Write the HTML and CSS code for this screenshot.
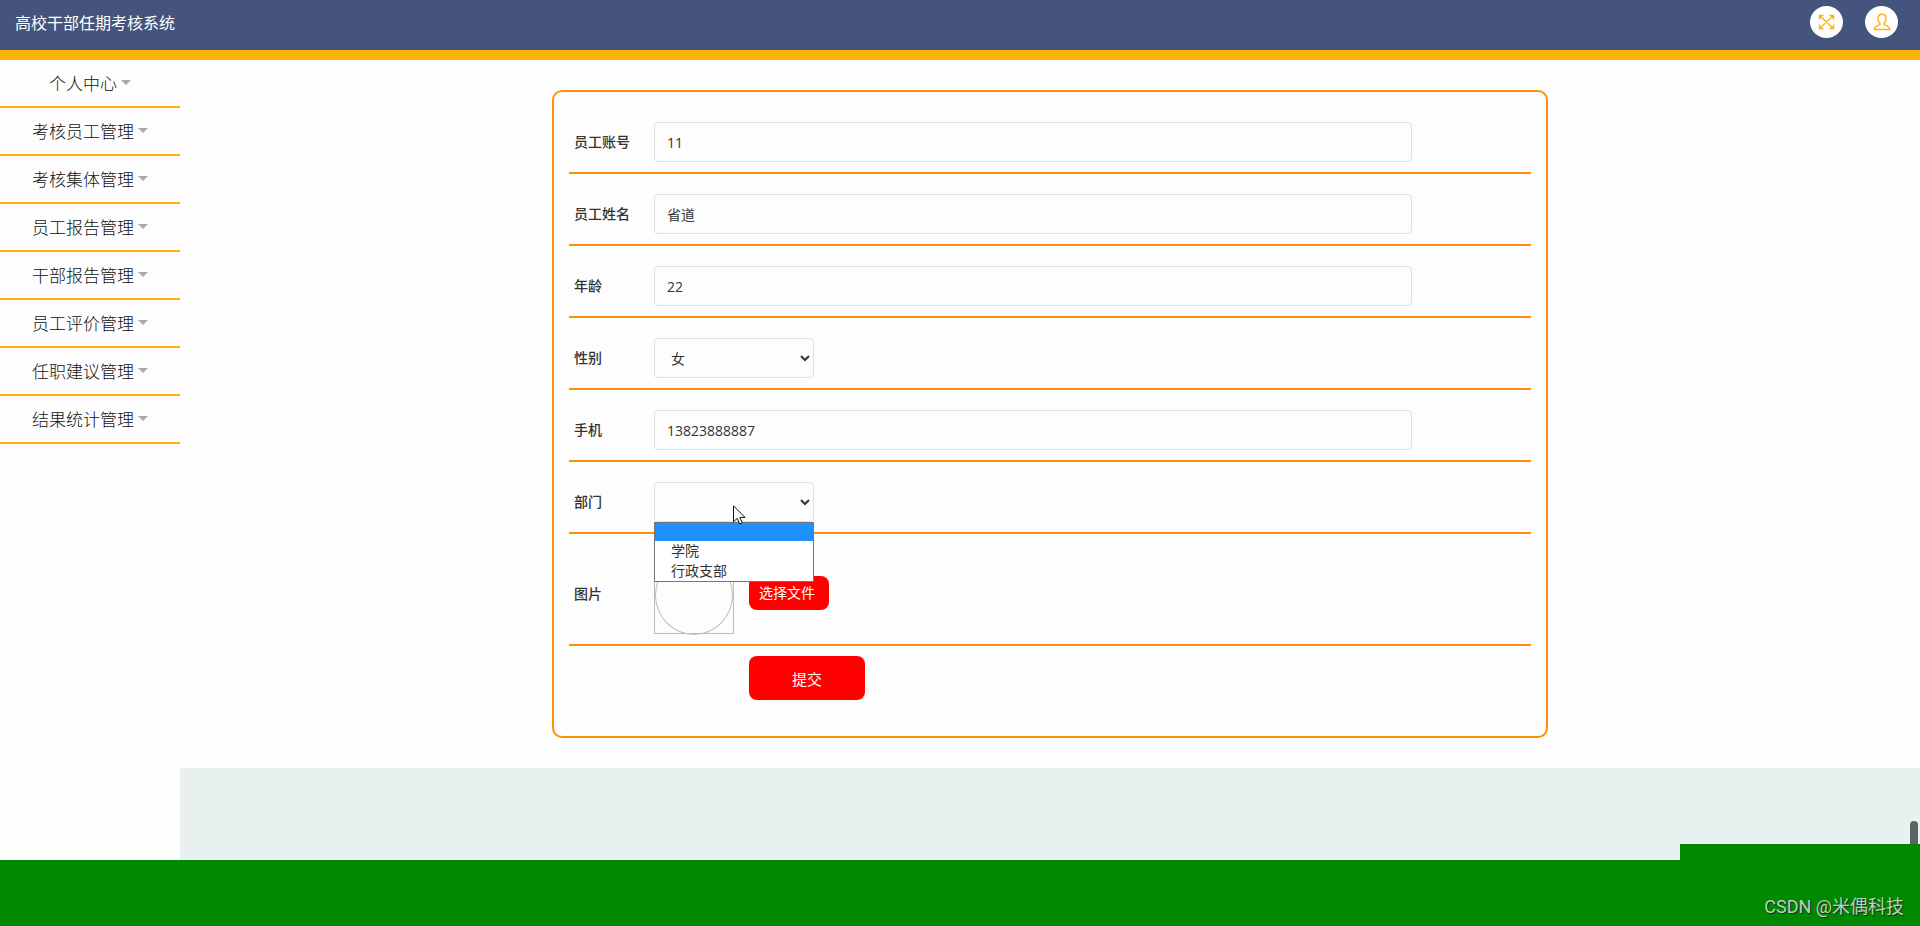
FILE: index.html
```html
<!DOCTYPE html>
<html lang="zh-CN">
<head>
    <meta charset="UTF-8">
    <meta name="viewport" content="width=device-width, initial-scale=1.0">
    <title>高校干部任期考核系统</title>
    <link rel="stylesheet" href="styles.css">
</head>
<body>

    <header class="header">
        <h1>高校干部任期考核系统</h1>
        <div class="header-actions">
            <button type="button" class="icon-btn" aria-label="全屏">
                <svg width="17" height="16" viewBox="0 0 17 16" fill="none" stroke="#ffb20a" stroke-width="1.4">
                    <path d="M1.5 1.5l14 13M15.500 1.500l-14 13M1.500 5.500v-4h4M11.500 1.500h4v4M15.500 10.500v4h-4M5.500 14.500h-4v-4"/>
                </svg>
            </button>
            <button type="button" class="icon-btn" aria-label="用户">
                <svg width="18" height="18" viewBox="0 0 18 18" fill="none" stroke="#ffb20a" stroke-width="1.4">
                    <path d="M7 10.500C5.600 9.300 5 7.600 5 5.600C5 3 6.600 1.200 9 1.200s4 1.800 4 4.400c0 2-.6 3.700-2 4.900v1.200c2.800.8 5.200 1.800 5.800 4.800H1.200c.6-3 3-4 5.800-4.800z"/>
                </svg>
            </button>
        </div>
    </header>

    <div class="container">
        <nav class="sidebar">
            <a href="#">个人中心<span class="caret"></span></a>
            <a href="#">考核员工管理<span class="caret"></span></a>
            <a href="#">考核集体管理<span class="caret"></span></a>
            <a href="#">员工报告管理<span class="caret"></span></a>
            <a href="#">干部报告管理<span class="caret"></span></a>
            <a href="#">员工评价管理<span class="caret"></span></a>
            <a href="#">任职建议管理<span class="caret"></span></a>
            <a href="#">结果统计管理<span class="caret"></span></a>
        </nav>

        <main class="main">
            <div class="content">
                <form class="form-card">
                    <div class="form-row">
                        <label for="account">员工账号</label>
                        <input type="text" id="account" value="11">
                    </div>
                    <div class="form-row">
                        <label for="name">员工姓名</label>
                        <input type="text" id="name" value="省道">
                    </div>
                    <div class="form-row">
                        <label for="age">年龄</label>
                        <input type="text" id="age" value="22">
                    </div>
                    <div class="form-row">
                        <label for="sex">性别</label>
                        <select id="sex">
                            <option>女</option>
                            <option>男</option>
                        </select>
                    </div>
                    <div class="form-row">
                        <label for="phone">手机</label>
                        <input type="text" id="phone" value="13823888887">
                    </div>
                    <div class="form-row">
                        <label for="dept">部门</label>
                        <div class="select-box">
                            <select id="dept">
                                <option></option>
                                <option>学院</option>
                                <option>行政支部</option>
                            </select>
                            <ul class="options">
                                <li class="active"></li>
                                <li>学院</li>
                                <li>行政支部</li>
                            </ul>
                            <svg class="cursor" width="13" height="20" viewBox="0 0 13 20">
                                <path d="M.5.8v16l3.700-3.500 2.500 5.600 2.500-1.100-2.400-5.400h5.200z" fill="#fff" stroke="#111"/>
                            </svg>
                        </div>
                    </div>
                    <div class="form-row">
                        <label for="upload">图片</label>
                        <div class="picture"></div>
                        <button type="button" class="btn upload-btn" id="upload">选择文件</button>
                    </div>
                    <div class="form-submit">
                        <button type="submit" class="btn submit-btn">提交</button>
                    </div>
                </form>
            </div>
            <div class="scroll-thumb"></div>
        </main>
    </div>

    <footer class="footer">
        <span>CSDN @米偶科技</span>
    </footer>

</body>
</html>
```
FILE: styles.css
```css
* {
    box-sizing: border-box;
}

body {
    font-family: "Open Sans", "Noto Sans CJK SC", sans-serif;
    font-size: 14px;
    margin: 0;
    min-height: 100vh;
    display: flex;
    flex-direction: column;
    color: #333;
    background-color: #fdfdfd;
}

.header {
    display: flex;
    justify-content: space-between;
    height: 60px;
    padding: 6px 22px 0 15px;
    background-color: #44547c;
    border-bottom: 10px solid #ffb20a;
}

.header h1 {
    margin: 0;
    font-size: 16px;
    font-weight: 400;
    line-height: 34px;
    color: #fff;
}

.header-actions {
    display: flex;
    gap: 22px;
}

.icon-btn {
    display: flex;
    justify-content: center;
    align-items: center;
    width: 33px;
    height: 32px;
    padding: 0;
    border: none;
    border-radius: 50%;
    background-color: #fff;
    cursor: pointer;
}

.container {
    display: flex;
    flex: 1;
}

.sidebar {
    width: 180px;
    flex-shrink: 0;
}

.sidebar a {
    display: flex;
    justify-content: center;
    align-items: center;
    gap: 4px;
    height: 48px;
    padding-bottom: 2px;
    border-bottom: 2px solid #ffb20a;
    font-size: 17px;
    font-weight: 300;
    color: #111;
    text-decoration: none;
}

.caret {
    border: 5px solid transparent;
    border-top-color: #aaa;
    border-bottom: none;
}

.main {
    position: relative;
    flex: 1;
    background-color: #e8f1f0;
}

.content {
    padding: 30px;
    background-color: #fdfdfd;
}

.form-card {
    max-width: 996px;
    margin: 0 auto;
    padding: 10px 15px 36px;
    border: 2px solid #ff8f0a;
    border-radius: 10px;
}

.form-row {
    display: flex;
    align-items: center;
    padding: 20px 0 10px 5px;
    border-bottom: 2px solid #ff8f0a;
}

.form-row label {
    width: 80px;
    flex-shrink: 0;
    padding-bottom: 2px;
    font-weight: 500;
}

.form-row input,
.form-row select {
    height: 40px;
    padding: 0 12px;
    border: 1px solid #e2dee2;
    border-radius: 4px;
    font: inherit;
    color: #333;
    background-color: #fdfdfd;
}

.form-row input {
    flex: 0 1 758px;
    min-width: 0;
}

.form-row select {
    width: 160px;
}

.select-box {
    position: relative;
}

.select-box select {
    display: block;
}

.options {
    position: absolute;
    top: 100%;
    left: 0;
    z-index: 2;
    width: 100%;
    margin: 0;
    padding: 0;
    border: 1px solid #767676;
    background-color: #fff;
    list-style: none;
}

.options li {
    height: 20px;
    padding-left: 16px;
    line-height: 20px;
}

.options .active {
    height: 18px;
    background-color: #1e90ff;
}

.cursor {
    position: absolute;
    top: 23px;
    left: 79px;
    z-index: 3;
}

.picture {
    width: 80px;
    height: 80px;
    border: 1px solid #bbb;
}

.picture::before {
    content: "";
    display: block;
    height: 100%;
    border: 1px solid #bbb;
    border-radius: 50%;
}

.btn {
    border: none;
    border-radius: 8px;
    font: inherit;
    color: #fff;
    background-color: #f00;
    cursor: pointer;
}

.upload-btn {
    width: 80px;
    height: 34px;
    margin: 0 0 2px 15px;
    padding: 0 4px 2px 0;
}

.form-submit {
    padding: 10px 0 0 180px;
}

.submit-btn {
    display: block;
    width: 116px;
    height: 44px;
    font-size: 15px;
}

.scroll-thumb {
    position: absolute;
    right: 2px;
    bottom: 16px;
    width: 8px;
    height: 23px;
    border-radius: 4px 4px 0 0;
    background-color: #5c6462;
}

.footer {
    position: relative;
    display: flex;
    justify-content: flex-end;
    height: 66px;
    padding: 34px 16px 0;
    background-color: #080;
    font-family: Roboto, "Noto Sans CJK SC", sans-serif;
    font-size: 18px;
    line-height: 26px;
    color: #b4d6b4;
    text-shadow: 1px 1px 1px #222;
}

/* raised part at the right end */
.footer::before {
    content: "";
    position: absolute;
    right: 0;
    bottom: 100%;
    width: 240px;
    height: 16px;
    background-color: #080;
}
```
